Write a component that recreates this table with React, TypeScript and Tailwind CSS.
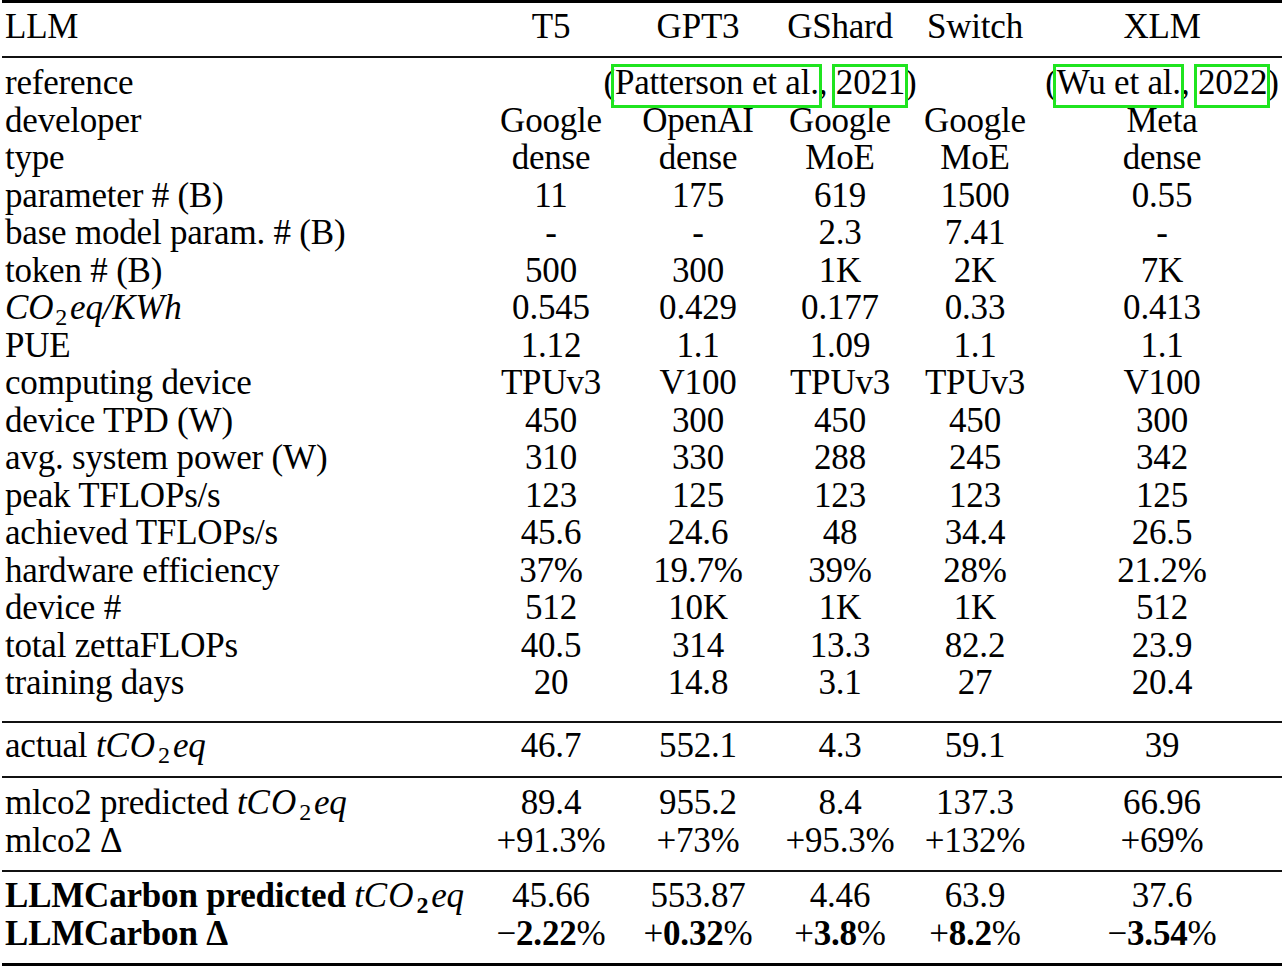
import React from 'react';

const cols = 'grid grid-cols-[476px_146px_148px_136px_134px_240px]';

// plain data rows between the second rule and the "actual" rule
const rows: { label: React.ReactNode; vals: string[] }[] = [
  { label: 'developer', vals: ['Google', 'OpenAI', 'Google', 'Google', 'Meta'] },
  { label: 'type', vals: ['dense', 'dense', 'MoE', 'MoE', 'dense'] },
  { label: 'parameter # (B)', vals: ['11', '175', '619', '1500', '0.55'] },
  { label: 'base model param. # (B)', vals: ['-', '-', '2.3', '7.41', '-'] },
  { label: 'token # (B)', vals: ['500', '300', '1K', '2K', '7K'] },
  { label: 'co2kwh', vals: ['0.545', '0.429', '0.177', '0.33', '0.413'] },
  { label: 'PUE', vals: ['1.12', '1.1', '1.09', '1.1', '1.1'] },
  { label: 'computing device', vals: ['TPUv3', 'V100', 'TPUv3', 'TPUv3', 'V100'] },
  { label: 'device TPD (W)', vals: ['450', '300', '450', '450', '300'] },
  { label: 'avg. system power (W)', vals: ['310', '330', '288', '245', '342'] },
  { label: 'peak TFLOPs/s', vals: ['123', '125', '123', '123', '125'] },
  { label: 'achieved TFLOPs/s', vals: ['45.6', '24.6', '48', '34.4', '26.5'] },
  { label: 'hardware efficiency', vals: ['37%', '19.7%', '39%', '28%', '21.2%'] },
  { label: 'device #', vals: ['512', '10K', '1K', '1K', '512'] },
  { label: 'total zettaFLOPs', vals: ['40.5', '314', '13.3', '82.2', '23.9'] },
  { label: 'training days', vals: ['20', '14.8', '3.1', '27', '20.4'] },
];

const Sub2 = ({ bold = false }: { bold?: boolean }) => (
  <span className={`inline-block not-italic ml-[2px] text-[24px] leading-none align-[-6px] ${bold ? 'font-bold' : 'font-normal'}`}>2</span>
);

const TCO2 = ({ bold = false }: { bold?: boolean }) => (
  <span className="italic font-normal">
    t<span className="tracking-[1px]">CO</span>
    <Sub2 bold={bold} />
    <span className="ml-[3px]">eq</span>
  </span>
);

const Co2Kwh = () => (
  <span className="italic">
    CO<Sub2 />
    <span className="ml-[3px]">eq/KWh</span>
  </span>
);

const Cite = ({ children }: { children: React.ReactNode }) => (
  <span className="relative">
    {children}
    <span className="absolute -left-[4px] -right-[3px] top-[1px] -bottom-[6px] border-[3px] border-[#1fe41f]" />
  </span>
);

const Row = ({ label, vals }: { label: React.ReactNode; vals: React.ReactNode[] }) => (
  <div className={`${cols} h-[37.5px] leading-[37.5px]`}>
    <div className="pl-[3px] whitespace-nowrap">{label}</div>
    {vals.map((v, i) => (
      <div key={i} className="text-center whitespace-nowrap">{v}</div>
    ))}
  </div>
);

const Pct = ({ sign, num }: { sign: string; num: string }) => (
  <span>
    {sign}
    <span className="font-bold">{num}</span>%
  </span>
);

export default function App() {
  return (
    <div className="w-[1286px] h-[967px] bg-white text-black overflow-hidden text-[35px] tracking-[-0.2px] font-[family-name:'Liberation_Serif',serif]">
      <div className="ml-[2px] w-[1280px]">
        <div className="h-[3px] bg-black" />
        <div className="pt-[5px] pb-[10.5px]">
          <Row label="LLM" vals={['T5', 'GPT3', 'GShard', 'Switch', 'XLM']} />
        </div>
        <div className="h-[2px] bg-[#111]" />

        <div className="pt-[6px] pb-[19.5px]">
          {/* reference row: first citation spans T5..Switch */}
          <div className={`${cols} h-[37.5px] leading-[37.5px]`}>
            <div className="pl-[3px]">reference</div>
            <div className="col-span-4 flex justify-center whitespace-nowrap">
              <span>
                (<Cite>Patterson et al.</Cite>, <Cite>2021</Cite>)
              </span>
            </div>
            <div className="flex justify-center whitespace-nowrap">
              <span>
                (<Cite>Wu et al.</Cite>, <Cite>2022</Cite>)
              </span>
            </div>
          </div>
          {rows.map((r, i) => (
            <Row key={i} label={r.label === 'co2kwh' ? <Co2Kwh /> : r.label} vals={r.vals} />
          ))}
        </div>
        <div className="h-[2px] bg-[#111]" />

        <div className="pt-[3.5px] pb-[12px]">
          <Row label={<>actual <TCO2 /></>} vals={['46.7', '552.1', '4.3', '59.1', '39']} />
        </div>
        <div className="h-[2px] bg-[#111]" />

        <div className="pt-[6px] pb-[11px]">
          <Row label={<>mlco2 predicted <TCO2 /></>} vals={['89.4', '955.2', '8.4', '137.3', '66.96']} />
          <Row label="mlco2 Δ" vals={['+91.3%', '+73%', '+95.3%', '+132%', '+69%']} />
        </div>
        <div className="h-[2px] bg-[#111]" />

        <div className="pt-[5px] pb-[10.5px]">
          <Row
            label={<><span className="font-bold">LLMCarbon predicted</span> <TCO2 bold /></>}
            vals={['45.66', '553.87', '4.46', '63.9', '37.6']}
          />
          <Row
            label={<span className="font-bold">LLMCarbon Δ</span>}
            vals={[
              <Pct sign="−" num="2.22" />,
              <Pct sign="+" num="0.32" />,
              <Pct sign="+" num="3.8" />,
              <Pct sign="+" num="8.2" />,
              <Pct sign="−" num="3.54" />,
            ]}
          />
        </div>
        <div className="h-[3px] bg-black" />
      </div>
    </div>
  );
}
